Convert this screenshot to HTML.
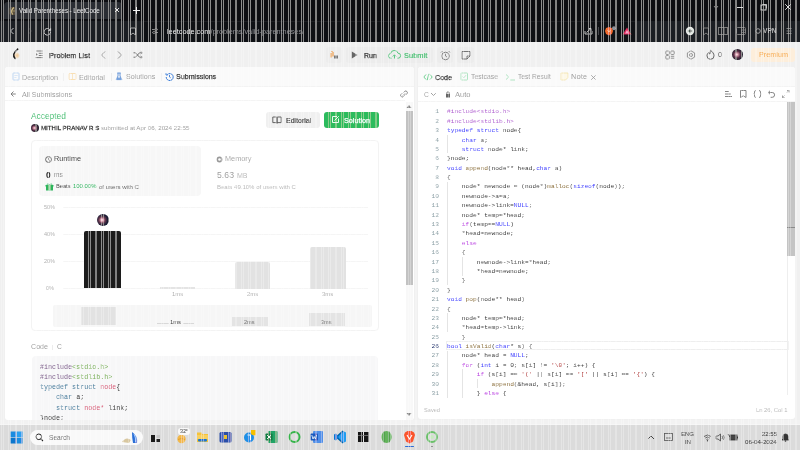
<!DOCTYPE html>
<html><head><meta charset="utf-8">
<style>
*{box-sizing:border-box;margin:0;padding:0}
html,body{width:800px;height:450px;overflow:hidden;background:#f0f0f0;font-family:"Liberation Sans",sans-serif;position:relative}
.a{position:absolute}
svg.a{overflow:visible}
.t{white-space:pre;line-height:1;will-change:transform}
.mono{font-family:"Liberation Mono",monospace}
#stripesA{left:0;top:0;width:800px;height:450px;pointer-events:none;z-index:98;mix-blend-mode:lighten;background:repeating-linear-gradient(to right,
 rgba(0,0,0,0) 0px, rgba(0,0,0,0) 1px,
 rgb(93,93,93) 1px, rgb(93,93,93) 2px,
 rgba(0,0,0,0) 2px, rgba(0,0,0,0) 3px,
 rgb(93,93,93) 3px, rgb(93,93,93) 4px,
 rgba(0,0,0,0) 4px, rgba(0,0,0,0) 8px,
 rgb(93,93,93) 8px, rgb(93,93,93) 9px,
 rgba(0,0,0,0) 9px, rgba(0,0,0,0) 10px,
 rgb(93,93,93) 10px, rgb(93,93,93) 11px,
 rgba(0,0,0,0) 11px, rgba(0,0,0,0) 15px,
 rgb(85,85,85) 15px, rgb(85,85,85) 17px,
 rgba(0,0,0,0) 17px, rgba(0,0,0,0) 20px)}
#stripesB{left:0;top:0;width:800px;height:450px;pointer-events:none;z-index:99;background:repeating-linear-gradient(to right,
 rgba(255,255,255,0) 0px, rgba(255,255,255,0) 1px,
 rgba(255,255,255,.29) 1px, rgba(255,255,255,.29) 2px,
 rgba(255,255,255,0) 2px, rgba(255,255,255,0) 3px,
 rgba(255,255,255,.29) 3px, rgba(255,255,255,.29) 4px,
 rgba(255,255,255,0) 4px, rgba(255,255,255,0) 8px,
 rgba(255,255,255,.29) 8px, rgba(255,255,255,.29) 9px,
 rgba(255,255,255,0) 9px, rgba(255,255,255,0) 10px,
 rgba(255,255,255,.29) 10px, rgba(255,255,255,.29) 11px,
 rgba(255,255,255,0) 11px, rgba(255,255,255,0) 15px,
 rgba(255,255,255,.26) 15px, rgba(255,255,255,.26) 17px,
 rgba(255,255,255,0) 17px, rgba(255,255,255,0) 20px)}
</style></head><body>
<div class="a" style="left:0px;top:0px;width:800.00px;height:42.00px;background:#0c0d11;"></div>
<div class="a" style="left:4px;top:2px;width:118.00px;height:17.00px;background:#2a2d33;border-radius:4px 4px 0 0"></div>
<div class="a" style="left:0px;top:20.5px;width:800.00px;height:21.50px;background:#1b1e23;"></div>
<div class="a" style="left:143px;top:21px;width:493.00px;height:20.50px;background:#0e1014;"></div>
<div class="a" style="left:143px;top:21px;width:493.00px;height:1.00px;background:#1c1e22;"></div>
<svg class="a" style="left:9px;top:6px;" width="7" height="10" viewBox="0 0 7 10"><rect x="0.5" y="1" width="6" height="8" rx="1.5" fill="#5a5040"/><path d="M4.8 1.5Q1 5 3.8 8.5" stroke="#d8c48a" stroke-width="1.1" fill="none"/><path d="M3.5 5H6" stroke="#a89868" stroke-width=".9"/></svg>
<div class="a t" style="left:19px;top:7.85px;font-size:6.3px;color:#f0f0f0;letter-spacing:-0.1px">Valid Parentheses - LeetCode</div>
<svg class="a" style="left:114px;top:7px;" width="6" height="6" viewBox="0 0 6 6"><path d="M1 1L5 5M5 1L1 5" stroke="#e0e0e0" stroke-width="1"/></svg>
<svg class="a" style="left:132px;top:6px;" width="9" height="9" viewBox="0 0 9 9"><path d="M4.5 1V8M1 4.5H8" stroke="#f0f0f0" stroke-width="1"/></svg>
<svg class="a" style="left:9px;top:27px;" width="6" height="8" viewBox="0 0 6 8"><path d="M4.5 1L1.5 4L4.5 7" stroke="#c8c8c8" stroke-width="1" fill="none"/></svg>
<svg class="a" style="left:27px;top:27px;" width="6" height="8" viewBox="0 0 6 8"><path d="M1.5 1L4.5 4L1.5 7" stroke="#3a3b3f" stroke-width="1" fill="none"/></svg>
<svg class="a" style="left:43px;top:27px;" width="9" height="9" viewBox="0 0 9 9"><path d="M7.2 3.2A3.3 3.3 0 1 0 7.6 5.2" stroke="#c8c8c8" stroke-width="1" fill="none"/><path d="M7.6 1.2V3.6H5.2" stroke="#c8c8c8" stroke-width="1" fill="none"/></svg>
<svg class="a" style="left:129px;top:27px;" width="8" height="9" viewBox="0 0 8 9"><path d="M1.5 1H6.5V8L4 6L1.5 8Z" stroke="#aaaaaa" stroke-width="1" fill="none"/></svg>
<svg class="a" style="left:151px;top:27px;" width="8" height="8" viewBox="0 0 8 8"><path d="M1 2.5H7M1 5.5H7" stroke="#8a8a8a" stroke-width="1"/><circle cx="5" cy="2.5" r="1.2" fill="#17181c" stroke="#8a8a8a" stroke-width=".8"/><circle cx="3" cy="5.5" r="1.2" fill="#17181c" stroke="#8a8a8a" stroke-width=".8"/></svg>
<div class="a t" style="left:167px;top:28.15px;font-size:7.3px;color:#f2f2f2;">leetcode.com<span style="color:#8d8e92">/problems/valid-parentheses/</span></div>
<svg class="a" style="left:584px;top:27px;" width="9" height="8" viewBox="0 0 9 8"><path d="M1 4V7H8V4" stroke="#c0c0c0" stroke-width="1" fill="none"/><path d="M2.5 5.5L7 1.5M4.5 1.5H7V4" stroke="#c0c0c0" stroke-width="1" fill="none"/></svg>
<div class="a" style="left:598px;top:27px;width:1.00px;height:8.00px;background:#44454a;"></div>
<svg class="a" style="left:604px;top:26px;" width="12" height="10" viewBox="0 0 12 10"><path d="M2 2L5 1L8 2L9 5L8 8L5 9.5L2 8L1 5Z" fill="#f26a2b"/><path d="M3.5 4L5 6L6.5 4" stroke="#ffd2b0" stroke-width=".8" fill="none"/><circle cx="10" cy="2.3" r="2" fill="#8d9099"/></svg>
<svg class="a" style="left:622px;top:27px;" width="10" height="8" viewBox="0 0 10 8"><path d="M5 0.5L9.5 7.5H0.5Z" fill="#e02a5c"/><path d="M5 3L7 6.5H3Z" fill="#f5a2c8"/></svg>
<svg class="a" style="left:685px;top:26px;" width="10" height="10" viewBox="0 0 10 10"><circle cx="5" cy="5" r="4.2" fill="#e4e8e4"/><path d="M5 2.8V7.2M2.8 5H7.2" stroke="#3a4a40" stroke-width=".8"/><circle cx="5" cy="5" r="1" fill="#3a4a40"/></svg>
<svg class="a" style="left:702px;top:27px;" width="8" height="9" viewBox="0 0 8 9"><path d="M1.5 1H6.5V8L4 6L1.5 8Z" stroke="#7a7a7a" stroke-width="1" fill="none"/></svg>
<svg class="a" style="left:718px;top:27px;" width="10" height="8" viewBox="0 0 10 8"><rect x="0.5" y="0.5" width="9" height="7" stroke="#7a7a7a" stroke-width="1" fill="none"/><path d="M6 0.5V7.5" stroke="#7a7a7a" stroke-width="1"/></svg>
<svg class="a" style="left:736px;top:27px;" width="10" height="8" viewBox="0 0 10 8"><rect x="0.5" y="0.5" width="9" height="7" rx="1" stroke="#7a7a7a" stroke-width="1" fill="none"/><rect x="5.5" y="3" width="4" height="2.5" stroke="#7a7a7a" stroke-width=".8" fill="none"/></svg>
<svg class="a" style="left:755px;top:27px;" width="6" height="8" viewBox="0 0 6 8"><circle cx="3" cy="4" r="2.3" stroke="#a0a0a0" stroke-width="1" fill="none"/></svg>
<div class="a t" style="left:763px;top:27.70px;font-size:6.6px;color:#b8b8b8;font-weight:700;">VPN</div>
<svg class="a" style="left:785px;top:27px;" width="8" height="8" viewBox="0 0 8 8"><path d="M1.5 1.5H6.5M1.5 4H6.5M1.5 6.5H6.5" stroke="#8a8a8a" stroke-width=".9"/></svg>
<svg class="a" style="left:712px;top:4px;" width="8" height="7" viewBox="0 0 8 7"><path d="M2 2L4 4.5L6 2" stroke="#888" stroke-width="1" fill="none"/><path d="M4 0V4.5" stroke="#666" stroke-width=".7"/></svg>
<div class="a" style="left:737px;top:7px;width:6.00px;height:1.00px;background:#d8d8d8;"></div>
<svg class="a" style="left:760px;top:3px;" width="8" height="8" viewBox="0 0 8 8"><rect x="1" y="2" width="5" height="5" stroke="#d8d8d8" stroke-width="1" fill="none"/><path d="M2.5 1.5H6.5V5.5" stroke="#d8d8d8" stroke-width=".8" fill="none"/></svg>
<svg class="a" style="left:784px;top:3px;" width="8" height="9" viewBox="0 0 8 9"><path d="M1.2 1.2L6.8 6.8M6.8 1.2L1.2 6.8" stroke="#d8d8d8" stroke-width="1"/></svg>
<div class="a" style="left:0px;top:42px;width:800.00px;height:382.00px;background:#f0f0f0;"></div>
<div class="a" style="left:13px;top:51.5px;width:7px;height:7px;border-radius:50%;background:radial-gradient(circle,#eec08a 0,#f3d6b0 35%,rgba(240,240,240,0) 72%)"></div>
<svg class="a" style="left:10px;top:47px;" width="10" height="13" viewBox="0 0 10 13"><path d="M7.5 2.2Q1.2 7.5 5.2 11.5" stroke="#1a1a1a" stroke-width="1.5" fill="none" stroke-linecap="round"/><circle cx="7.6" cy="2.2" r=".8" fill="#1a1a1a"/></svg>
<svg class="a" style="left:35px;top:50px;" width="9" height="9" viewBox="0 0 9 9"><path d="M1.2 1H7.5M3.8 3.3H7.5M3.8 5.5H7.5M0.5 7.6H7.5" stroke="#555" stroke-width=".75"/><path d="M1 3L2.6 4.4L1 5.8Z" fill="#555"/></svg>
<div class="a t" style="left:49px;top:51.91px;font-size:7.38px;color:#333;-webkit-text-stroke:0.25px #333">Problem List</div>
<svg class="a" style="left:100px;top:50px;" width="6" height="10" viewBox="0 0 6 10"><path d="M5 1.5L1.5 5L5 8.5" stroke="#9a9a9a" stroke-width="1" fill="none"/></svg>
<svg class="a" style="left:117px;top:50px;" width="6" height="10" viewBox="0 0 6 10"><path d="M1 1.5L4.5 5L1 8.5" stroke="#9a9a9a" stroke-width="1" fill="none"/></svg>
<svg class="a" style="left:133px;top:51px;" width="10" height="8" viewBox="0 0 10 8"><path d="M0.5 1.8H2.5L6.5 6.2H9M0.5 6.2H2.5L6.5 1.8H9" stroke="#666" stroke-width=".9" fill="none"/><path d="M7.8 0.5L9.2 1.8L7.8 3.1M7.8 4.9L9.2 6.2L7.8 7.5" stroke="#666" stroke-width=".8" fill="none"/></svg>
<div class="a" style="left:326px;top:47px;width:16.00px;height:16.00px;background:#ececec;border-radius:3px"></div>
<svg class="a" style="left:329px;top:50px;" width="10" height="10" viewBox="0 0 10 10"><path d="M2 3V7.5M4 2V6.5M3 1L3 2" stroke="#f0a050" stroke-width="1.2"/><rect x="5" y="5.5" width="4" height="3" fill="#777"/></svg>
<div class="a" style="left:346px;top:47px;width:87.00px;height:16.00px;background:#ececec;border-radius:3px"></div>
<svg class="a" style="left:350px;top:50px;" width="9" height="10" viewBox="0 0 9 10"><path d="M1.8 1.5L7.5 5L1.8 8.5Z" fill="#666"/></svg>
<div class="a t" style="left:364px;top:52.66px;font-size:7.09px;color:#333;-webkit-text-stroke:0.25px #333">Run</div>
<svg class="a" style="left:388px;top:49px;" width="13" height="11" viewBox="0 0 13 11"><path d="M3.5 9.2H2.8A2.3 2.3 0 0 1 2.6 4.6A3.8 3.8 0 0 1 10 4.2A2.5 2.5 0 0 1 10.2 9.2H9.5" stroke="#5cc882" stroke-width="1" fill="none"/><path d="M6.5 9.5V6M4.8 7.5L6.5 5.8L8.2 7.5" stroke="#5cc882" stroke-width="1" fill="none"/></svg>
<div class="a t" style="left:404px;top:52.45px;font-size:7.5px;color:#48c072;-webkit-text-stroke:0.2px #48c072">Submit</div>
<div class="a" style="left:437px;top:47px;width:16.00px;height:16.00px;background:#ececec;border-radius:3px"></div>
<svg class="a" style="left:440px;top:50px;" width="11" height="11" viewBox="0 0 11 11"><circle cx="5.5" cy="6" r="3.8" stroke="#777" stroke-width=".9" fill="none"/><path d="M5.5 3.8V6L7 7" stroke="#777" stroke-width=".8" fill="none"/><path d="M1 2.5L2.5 1M10 2.5L8.5 1" stroke="#777" stroke-width=".9"/></svg>
<div class="a" style="left:457px;top:47px;width:17.00px;height:16.00px;background:#ececec;border-radius:3px"></div>
<svg class="a" style="left:461px;top:50px;" width="10" height="10" viewBox="0 0 10 10"><path d="M1 1.5H9V6L6 9H1Z" stroke="#666" stroke-width=".9" fill="none"/><path d="M6 9V6H9" stroke="#666" stroke-width=".8" fill="none"/></svg>
<svg class="a" style="left:665px;top:50px;" width="10" height="10" viewBox="0 0 10 10"><rect x="0.8" y="1" width="3.5" height="3.5" rx=".8" stroke="#8a8a8a" stroke-width=".9" fill="none"/><rect x="0.8" y="5.5" width="3.5" height="3.5" rx=".8" stroke="#8a8a8a" stroke-width=".9" fill="none"/><rect x="5.7" y="1" width="3.5" height="3.5" rx=".8" stroke="#8a8a8a" stroke-width=".9" fill="none"/><path d="M5.7 6.3H9.2M5.7 8.2H9.2" stroke="#8a8a8a" stroke-width=".9"/></svg>
<svg class="a" style="left:686px;top:50px;" width="10" height="10" viewBox="0 0 10 10"><path d="M5 0.8L8.6 2.9V7.1L5 9.2L1.4 7.1V2.9Z" stroke="#8a8a8a" stroke-width=".9" fill="none"/><circle cx="5" cy="5" r="1.5" stroke="#8a8a8a" stroke-width=".9" fill="none"/></svg>
<svg class="a" style="left:706px;top:49px;" width="9" height="11" viewBox="0 0 9 11"><path d="M4.5 1.2C6.5 3 8 4.5 8 6.8A3.5 3.5 0 0 1 1 6.8C1 5.3 1.8 4.3 2.8 3.4C3 4.5 3.5 5 4 5C4.5 3.5 4.3 2.3 4.5 1.2Z" stroke="#555" stroke-width=".9" fill="none"/></svg>
<div class="a t" style="left:718px;top:51.25px;font-size:7.5px;color:#666;">0</div>
<div class="a" style="left:732px;top:49px;width:11px;height:11px;border-radius:50%;background:radial-gradient(circle at 45% 50%,#ffe8f0 0,#d090a0 16%,#5a3048 40%,#1c1a28 70%)"></div>
<div class="a" style="left:751px;top:48px;width:44.00px;height:13.50px;background:#fdeedb;border-radius:3px"></div>
<div class="a t" style="left:759px;top:50.98px;font-size:7.25px;color:#f6aa50;">Premium</div>
<div class="a" style="left:4.5px;top:67px;width:409.20px;height:352.50px;background:#ffffff;border-radius:3px"></div>
<div class="a" style="left:4.5px;top:67px;width:409.20px;height:19.00px;background:#fafafa;border-radius:3px 3px 0 0"></div>
<div class="a" style="left:4.5px;top:86px;width:409.20px;height:0.60px;background:#f3f3f3;"></div>
<div class="a" style="left:4.5px;top:100.2px;width:400.50px;height:0.60px;background:#f4f4f4;"></div>
<svg class="a" style="left:12px;top:72px;" width="8" height="9" viewBox="0 0 8 9"><rect x="1" y="1" width="6" height="7" rx=".6" stroke="#b8d2f2" stroke-width=".9" fill="none"/><path d="M2.5 3.5H5.5M2.5 5.5H4.5" stroke="#b8d2f2" stroke-width=".7"/></svg>
<div class="a t" style="left:22px;top:74.20px;font-size:7.2px;color:#a0a0a0;">Description</div>
<div class="a" style="left:63px;top:73px;width:0.60px;height:8.00px;background:#ececec;"></div>
<svg class="a" style="left:68px;top:72px;" width="9" height="9" viewBox="0 0 9 9"><rect x="1" y="1.5" width="7" height="6" rx=".6" stroke="#f8dcae" stroke-width=".9" fill="none"/><path d="M4.5 1.5V7.5" stroke="#f8dcae" stroke-width=".7"/></svg>
<div class="a t" style="left:79px;top:74.20px;font-size:7.2px;color:#a0a0a0;">Editorial</div>
<div class="a" style="left:111px;top:73px;width:0.60px;height:8.00px;background:#ececec;"></div>
<svg class="a" style="left:115px;top:72px;" width="8" height="9" viewBox="0 0 8 9"><path d="M3 1V4L1.2 7.6H6.8L5 4V1M2.3 1H5.7" stroke="#5b8fd6" stroke-width=".9" fill="none"/><path d="M2 6.2H6" stroke="#5b8fd6" stroke-width="1.2"/></svg>
<div class="a t" style="left:125.6px;top:74.22px;font-size:7.15px;color:#a0a0a0;">Solutions</div>
<div class="a" style="left:161px;top:73px;width:0.60px;height:8.00px;background:#ececec;"></div>
<svg class="a" style="left:165px;top:72px;" width="9" height="9" viewBox="0 0 9 9"><path d="M2.2 2.6A3.5 3.5 0 1 1 1.2 5" stroke="#3b7dd8" stroke-width="1" fill="none"/><path d="M4.5 3V5L6 6" stroke="#3b7dd8" stroke-width=".9" fill="none"/><path d="M1 1.2V3H2.8" stroke="#3b7dd8" stroke-width=".9" fill="none"/></svg>
<div class="a t" style="left:175.6px;top:74.23px;font-size:7.13px;color:#333;-webkit-text-stroke:0.25px #333">Submissions</div>
<svg class="a" style="left:10px;top:90px;" width="7" height="8" viewBox="0 0 7 8"><path d="M6 4H1M3.5 1.5L1 4L3.5 6.5" stroke="#777" stroke-width=".9" fill="none"/></svg>
<div class="a t" style="left:22px;top:91.66px;font-size:7.08px;color:#999;">All Submissions</div>
<svg class="a" style="left:399px;top:90px;" width="10" height="8" viewBox="0 0 10 8"><path d="M4 5.5L6 3.5" stroke="#777" stroke-width=".9"/><path d="M3.2 3.2L2 4.4A1.6 1.6 0 0 0 4.3 6.6L5.5 5.4M4.5 2.6L5.7 1.4A1.6 1.6 0 0 1 8 3.6L6.8 4.8" stroke="#777" stroke-width=".9" fill="none"/></svg>
<div class="a" style="left:405.5px;top:102px;width:7.50px;height:317.50px;background:#f8f8f8;"></div>
<svg class="a" style="left:406px;top:104px;" width="6" height="5" viewBox="0 0 6 5"><path d="M3 1L5.5 4H0.5Z" fill="#888"/></svg>
<div class="a" style="left:405.5px;top:111px;width:7.50px;height:174.00px;background:#c2c2c2;"></div>
<svg class="a" style="left:406px;top:412px;" width="6" height="5" viewBox="0 0 6 5"><path d="M3 4L5.5 1H0.5Z" fill="#888"/></svg>
<div class="a t" style="left:31px;top:111.50px;font-size:8.39px;color:#45bd70;">Accepted</div>
<div class="a" style="left:31px;top:123.8px;width:8px;height:8px;border-radius:50%;background:radial-gradient(circle at 42% 50%,#ffe8f0 0,#d090a0 16%,#5a3048 40%,#1c1a28 70%)"></div>
<div class="a t" style="left:41px;top:125.12px;font-size:6.15px;color:#3a3a3a;-webkit-text-stroke:0.3px #3a3a3a">MITHIL PRANAV R S</div>
<div class="a t" style="left:100.8px;top:124.98px;font-size:6.24px;color:#9a9a9a;">submitted at Apr 06, 2024 22:55</div>
<div class="a" style="left:266.4px;top:112px;width:53.40px;height:16.00px;background:#f0f0f0;border-radius:3px"></div>
<svg class="a" style="left:272px;top:116px;" width="10" height="8" viewBox="0 0 10 8"><path d="M0.8 1H4.2Q5 1 5 1.8V7.2Q5 6.6 4.2 6.6H0.8Z M9.2 1H5.8Q5 1 5 1.8V7.2Q5 6.6 5.8 6.6H9.2Z" stroke="#555" stroke-width=".9" fill="none"/></svg>
<div class="a t" style="left:285.6px;top:116.90px;font-size:7.0px;color:#444;-webkit-text-stroke:0.2px #444">Editorial</div>
<div class="a" style="left:324px;top:112px;width:55.30px;height:16.00px;background:#2cbb5d;border-radius:3px"></div>
<svg class="a" style="left:331px;top:115px;" width="9" height="9" viewBox="0 0 9 9"><path d="M6 1.5H1.5V7.5H7.5V3.5" stroke="#fff" stroke-width=".9" fill="none"/><path d="M3.5 5.5L7.8 1.2" stroke="#fff" stroke-width=".9"/></svg>
<div class="a t" style="left:344px;top:116.90px;font-size:7.2px;color:#ffffff;-webkit-text-stroke:0.25px #fff">Solution</div>
<div class="a" style="left:31px;top:140px;width:347.75px;height:190.50px;background:#ffffff;border:0.6px solid #f3f3f3;border-radius:4px"></div>
<div class="a" style="left:38.75px;top:146px;width:162.25px;height:50.00px;background:#f7f7f7;border-radius:4px"></div>
<svg class="a" style="left:45px;top:156px;" width="7" height="7" viewBox="0 0 7 7"><circle cx="3.5" cy="3.5" r="2.9" stroke="#444" stroke-width=".8" fill="none"/><path d="M3.5 1.8V3.6L4.6 4.4" stroke="#444" stroke-width=".7" fill="none"/></svg>
<div class="a t" style="left:54px;top:155.07px;font-size:7.25px;color:#444;">Runtime</div>
<div class="a t" style="left:46px;top:170.75px;font-size:8.5px;color:#222;font-weight:700;">0</div>
<div class="a t" style="left:54px;top:172.25px;font-size:6.5px;color:#888;">ms</div>
<svg class="a" style="left:45px;top:183px;" width="9" height="8" viewBox="0 0 9 8"><path d="M1 3H8V7.5H1Z" fill="#2db55d"/><path d="M0.5 2H8.5V3.5H0.5Z" fill="#2db55d"/><path d="M4.5 2V7.5" stroke="#fff" stroke-width=".6"/><path d="M4.5 2C3 0 1.5 1 2.5 2M4.5 2C6 0 7.5 1 6.5 2" stroke="#2db55d" stroke-width=".7" fill="none"/></svg>
<div class="a t" style="left:55.5px;top:184.16px;font-size:5.67px;color:#444;">Beats</div>
<div class="a t" style="left:72.5px;top:184.03px;font-size:5.95px;color:#2db55d;">100.00%</div>
<div class="a t" style="left:99px;top:183.97px;font-size:6.05px;color:#666;">of users with C</div>
<svg class="a" style="left:216px;top:156px;" width="7" height="7" viewBox="0 0 7 7"><circle cx="3.5" cy="3.5" r="2.9" fill="#999"/><circle cx="3.5" cy="3.5" r="1.3" fill="#fff"/></svg>
<div class="a t" style="left:224.5px;top:155.03px;font-size:7.34px;color:#a8a8a8;">Memory</div>
<div class="a t" style="left:217px;top:170.63px;font-size:8.74px;color:#a0a0a0;">5.63</div>
<div class="a t" style="left:236.5px;top:171.80px;font-size:7.0px;color:#b8b8b8;">MB</div>
<div class="a t" style="left:217px;top:183.99px;font-size:6.02px;color:#b8b8b8;">Beats 49.10% of users with C</div>
<div class="a t" style="left:44px;top:204.55px;font-size:5.5px;color:#b0b0b0;">50%</div>
<div class="a" style="left:63px;top:206.5px;width:304.70px;height:0.60px;background:#f5f5f5;"></div>
<div class="a t" style="left:44px;top:231.55px;font-size:5.5px;color:#b0b0b0;">40%</div>
<div class="a" style="left:63px;top:233.5px;width:304.70px;height:0.60px;background:#f5f5f5;"></div>
<div class="a t" style="left:44px;top:259.05px;font-size:5.5px;color:#b0b0b0;">20%</div>
<div class="a" style="left:63px;top:261px;width:304.70px;height:0.60px;background:#f5f5f5;"></div>
<div class="a t" style="left:45.5px;top:286.05px;font-size:5.5px;color:#b0b0b0;">0%</div>
<div class="a" style="left:63px;top:288px;width:304.70px;height:0.60px;background:#f5f5f5;"></div>
<div class="a" style="left:84px;top:231px;width:37.00px;height:56.60px;background:#1c1c1c;border-radius:2px 2px 0 0"></div>
<div class="a" style="left:96.6px;top:214px;width:12px;height:12px;border-radius:50%;background:radial-gradient(circle at 42% 50%,#fff0f0 0,#e0a0b0 14%,#6a3a50 34%,#1a1c34 60%,#161628 80%)"></div>
<div class="a" style="left:160px;top:286.5px;width:35.00px;height:2.50px;background:#e4e4e4;"></div>
<div class="a" style="left:234.5px;top:262px;width:35.50px;height:27.00px;background:#e2e2e2;border-radius:2px 2px 0 0"></div>
<div class="a" style="left:309.5px;top:246.5px;width:36.10px;height:42.50px;background:#e2e2e2;border-radius:2px 2px 0 0"></div>
<div class="a t" style="left:172.3px;top:292.05px;font-size:5.9px;color:#b0b0b0;">1ms</div>
<div class="a t" style="left:246.5px;top:292.05px;font-size:5.9px;color:#b0b0b0;">2ms</div>
<div class="a t" style="left:321.5px;top:292.05px;font-size:5.9px;color:#b0b0b0;">3ms</div>
<div class="a" style="left:53px;top:304.7px;width:319.00px;height:22.30px;background:#f6f6f6;border-radius:2px"></div>
<div class="a" style="left:80.6px;top:307px;width:35.40px;height:18.00px;background:#e2e2e2;"></div>
<div class="a" style="left:157px;top:322.8px;width:37.00px;height:0.60px;background:#d8d8d8;"></div>
<div class="a" style="left:169px;top:319px;width:14.00px;height:7.00px;background:#f6f6f6;"></div>
<div class="a t" style="left:170px;top:319.60px;font-size:5.8px;color:#444;">1ms</div>
<div class="a" style="left:232px;top:317px;width:36.00px;height:8.60px;background:#e4e4e4;"></div>
<div class="a t" style="left:244px;top:320.00px;font-size:5.6px;color:#777;">2ms</div>
<div class="a" style="left:309px;top:312.7px;width:35.50px;height:12.90px;background:#e4e4e4;"></div>
<div class="a t" style="left:321px;top:320.20px;font-size:5.6px;color:#777;">3ms</div>
<div class="a t" style="left:31px;top:343.75px;font-size:7.11px;color:#a0a0a0;">Code</div>
<div class="a" style="left:52px;top:344.5px;width:0.60px;height:5.50px;background:#ececec;"></div>
<div class="a t" style="left:57px;top:343.90px;font-size:6.8px;color:#a0a0a0;">C</div>
<div class="a" style="left:31.5px;top:355.5px;width:346.00px;height:65.50px;background:#f7f7f8;border-radius:4px 4px 0 0"></div>
<div class="a t mono" style="left:39.5px;top:363.80px;font-size:6.69px;"><span style="color:#7a5a88">#include</span><span style="color:#7ab05a">&lt;stdio.h&gt;</span></div>
<div class="a t mono" style="left:39.5px;top:374.00px;font-size:6.69px;"><span style="color:#7a5a88">#include</span><span style="color:#7ab05a">&lt;stdlib.h&gt;</span></div>
<div class="a t mono" style="left:39.5px;top:384.20px;font-size:6.69px;"><span style="color:#4a7d9c">typedef struct </span><span style="color:#d8607a">node</span><span style="color:#3a3a3a">{</span></div>
<div class="a t mono" style="left:39.5px;top:394.40px;font-size:6.69px;"><span style="color:#3a3a3a">    </span><span style="color:#4a7d9c">char</span><span style="color:#3a3a3a"> a;</span></div>
<div class="a t mono" style="left:39.5px;top:404.60px;font-size:6.69px;"><span style="color:#3a3a3a">    </span><span style="color:#4a7d9c">struct </span><span style="color:#d8607a">node*</span><span style="color:#3a3a3a"> link;</span></div>
<div class="a t mono" style="left:39.5px;top:414.80px;font-size:6.69px;"><span style="color:#3a3a3a">}node;</span></div>
<div class="a" style="left:0px;top:419.5px;width:800.00px;height:5.30px;background:#f2f2f2;"></div>
<div class="a" style="left:418px;top:67px;width:376.70px;height:352.00px;background:#ffffff;border-radius:3px"></div>
<div class="a" style="left:418px;top:67px;width:376.70px;height:19.00px;background:#fafafa;border-radius:3px 3px 0 0"></div>
<div class="a" style="left:418px;top:86px;width:376.70px;height:0.60px;background:#f3f3f3;"></div>
<div class="a" style="left:418px;top:101.2px;width:376.70px;height:0.60px;background:#f4f4f4;"></div>
<svg class="a" style="left:423px;top:73px;" width="10" height="8" viewBox="0 0 10 8"><path d="M3 1.5L0.8 4L3 6.5M7 1.5L9.2 4L7 6.5M5.8 0.8L4.2 7.2" stroke="#5cc882" stroke-width=".9" fill="none"/></svg>
<div class="a t" style="left:434.5px;top:74.64px;font-size:7.11px;color:#333;-webkit-text-stroke:0.25px #333">Code</div>
<svg class="a" style="left:460px;top:72px;" width="8" height="9" viewBox="0 0 8 9"><rect x="1" y="1" width="6.5" height="7" rx=".6" stroke="#a8e2bc" stroke-width=".9" fill="none"/><path d="M2.6 4.6L3.8 5.8L6 3.2" stroke="#a8e2bc" stroke-width=".8" fill="none"/></svg>
<div class="a t" style="left:470.5px;top:74.38px;font-size:6.84px;color:#a0a0a0;">Testcase</div>
<svg class="a" style="left:505px;top:73px;" width="11" height="8" viewBox="0 0 11 8"><path d="M1 1.5L3.8 4L1 6.5" stroke="#a8e2bc" stroke-width=".9" fill="none"/><path d="M5 7H10" stroke="#a8e2bc" stroke-width=".9"/></svg>
<div class="a t" style="left:517.5px;top:74.47px;font-size:6.67px;color:#a0a0a0;">Test Result</div>
<svg class="a" style="left:560px;top:72px;" width="9" height="9" viewBox="0 0 9 9"><path d="M1 1H8V5.5L5.5 8H1Z" stroke="#f3e2a8" stroke-width=".8" fill="#fdf8e8"/></svg>
<div class="a t" style="left:571px;top:73.30px;font-size:7.6px;color:#999;">Note</div>
<svg class="a" style="left:590px;top:74px;" width="7" height="7" viewBox="0 0 7 7"><path d="M1.2 1.2L5.8 5.8M5.8 1.2L1.2 5.8" stroke="#999" stroke-width=".8"/></svg>
<div class="a t" style="left:424px;top:91.70px;font-size:6.8px;color:#a8a8a8;">C</div>
<svg class="a" style="left:430px;top:92px;" width="7" height="5" viewBox="0 0 7 5"><path d="M1 1L3.5 3.5L6 1" stroke="#999" stroke-width=".9" fill="none"/></svg>
<svg class="a" style="left:445px;top:91px;" width="6" height="7" viewBox="0 0 6 7"><rect x="1" y="3" width="4" height="3.5" fill="#666"/><path d="M1.8 3V2A1.2 1.2 0 0 1 4.2 2V3" stroke="#666" stroke-width=".8" fill="none"/></svg>
<div class="a t" style="left:454.5px;top:90.73px;font-size:7.54px;color:#999;">Auto</div>
<svg class="a" style="left:724px;top:89px;" width="10" height="10" viewBox="0 0 10 10"><path d="M1 2.5H5M1 5H7M1 7.5H8" stroke="#777" stroke-width=".9"/></svg>
<svg class="a" style="left:739px;top:89px;" width="9" height="10" viewBox="0 0 9 10"><path d="M1.5 1.5H7V8.5L4.25 6.8L1.5 8.5Z" stroke="#777" stroke-width=".9" fill="none"/></svg>
<svg class="a" style="left:753px;top:89px;" width="9" height="10" viewBox="0 0 9 10"><path d="M3 1.5Q1.5 1.5 1.5 3V4.3L0.8 5L1.5 5.7V7Q1.5 8.5 3 8.5M6 1.5Q7.5 1.5 7.5 3V4.3L8.2 5L7.5 5.7V7Q7.5 8.5 6 8.5" stroke="#777" stroke-width=".85" fill="none"/></svg>
<svg class="a" style="left:767px;top:89px;" width="9" height="10" viewBox="0 0 9 10"><path d="M3 1.8L1.2 3.5L3 5.2" stroke="#777" stroke-width=".9" fill="none"/><path d="M1.5 3.5H5.2A2.4 2.4 0 0 1 5.2 8.3H3.5" stroke="#777" stroke-width=".9" fill="none"/></svg>
<svg class="a" style="left:781px;top:89px;" width="9" height="10" viewBox="0 0 9 10"><path d="M6 1.5H8V3.5M1.5 6.5V8.5H3.5" stroke="#888" stroke-width=".8" fill="none"/><path d="M8 1.5L6 3.5M1.5 8.5L3.5 6.5" stroke="#888" stroke-width=".7"/></svg>
<div class="a" style="left:418px;top:102px;width:376.70px;height:303.00px;background:#ffffff;"></div>
<div class="a" style="left:446px;top:341px;width:343.00px;height:9.30px;background:transparent;border:0.7px solid #eeeeee"></div>
<div class="a" style="left:787px;top:102px;width:0.60px;height:293.00px;background:#eeeeee;"></div>
<div class="a" style="left:787.3px;top:102px;width:7.70px;height:154.00px;background:#c4c4c4;"></div>
<div class="a" style="left:787.3px;top:226.5px;width:7.70px;height:1.50px;background:#8a8a8a;"></div>
<div class="a" style="left:447px;top:134.72500000000002px;width:0.70px;height:9.39px;background:#e4e4e4;"></div>
<div class="a" style="left:447px;top:144.115px;width:0.70px;height:9.39px;background:#e4e4e4;"></div>
<div class="a" style="left:447px;top:181.675px;width:0.70px;height:9.39px;background:#e4e4e4;"></div>
<div class="a" style="left:447px;top:191.065px;width:0.70px;height:9.39px;background:#e4e4e4;"></div>
<div class="a" style="left:447px;top:200.455px;width:0.70px;height:9.39px;background:#e4e4e4;"></div>
<div class="a" style="left:447px;top:209.84500000000003px;width:0.70px;height:9.39px;background:#e4e4e4;"></div>
<div class="a" style="left:447px;top:219.235px;width:0.70px;height:9.39px;background:#e4e4e4;"></div>
<div class="a" style="left:447px;top:228.625px;width:0.70px;height:9.39px;background:#e4e4e4;"></div>
<div class="a" style="left:447px;top:238.01500000000001px;width:0.70px;height:9.39px;background:#e4e4e4;"></div>
<div class="a" style="left:447px;top:247.40500000000003px;width:0.70px;height:9.39px;background:#e4e4e4;"></div>
<div class="a" style="left:447px;top:256.795px;width:0.70px;height:9.39px;background:#e4e4e4;"></div>
<div class="a" style="left:447px;top:266.185px;width:0.70px;height:9.39px;background:#e4e4e4;"></div>
<div class="a" style="left:447px;top:275.575px;width:0.70px;height:9.39px;background:#e4e4e4;"></div>
<div class="a" style="left:447px;top:313.13500000000005px;width:0.70px;height:9.39px;background:#e4e4e4;"></div>
<div class="a" style="left:447px;top:322.52500000000003px;width:0.70px;height:9.39px;background:#e4e4e4;"></div>
<div class="a" style="left:447px;top:350.695px;width:0.70px;height:9.39px;background:#e4e4e4;"></div>
<div class="a" style="left:447px;top:360.08500000000004px;width:0.70px;height:9.39px;background:#e4e4e4;"></div>
<div class="a" style="left:447px;top:369.475px;width:0.70px;height:9.39px;background:#e4e4e4;"></div>
<div class="a" style="left:447px;top:378.865px;width:0.70px;height:9.39px;background:#e4e4e4;"></div>
<div class="a" style="left:447px;top:388.25500000000005px;width:0.70px;height:9.39px;background:#e4e4e4;"></div>
<div class="a" style="left:462px;top:256.795px;width:0.70px;height:9.39px;background:#e4e4e4;"></div>
<div class="a" style="left:462px;top:266.185px;width:0.70px;height:9.39px;background:#e4e4e4;"></div>
<div class="a" style="left:462px;top:369.475px;width:0.70px;height:9.39px;background:#e4e4e4;"></div>
<div class="a" style="left:462px;top:378.865px;width:0.70px;height:9.39px;background:#e4e4e4;"></div>
<div class="a" style="left:462px;top:388.25500000000005px;width:0.70px;height:9.39px;background:#e4e4e4;"></div>
<div class="a" style="left:477px;top:378.865px;width:0.70px;height:9.39px;background:#e4e4e4;"></div>
<div class="a t mono" style="left:419px;width:20px;text-align:right;top:109.35px;font-size:6.19px;color:#8a9ea4">1</div>
<div class="a t mono" style="left:447px;top:109.35px;font-size:6.19px;"><span style="color:#b060d0">#include&lt;stdio.h&gt;</span></div>
<div class="a t mono" style="left:419px;width:20px;text-align:right;top:118.74px;font-size:6.19px;color:#8a9ea4">2</div>
<div class="a t mono" style="left:447px;top:118.74px;font-size:6.19px;"><span style="color:#b060d0">#include&lt;stdlib.h&gt;</span></div>
<div class="a t mono" style="left:419px;width:20px;text-align:right;top:128.13px;font-size:6.19px;color:#8a9ea4">3</div>
<div class="a t mono" style="left:447px;top:128.13px;font-size:6.19px;"><span style="color:#3a3aff">typedef</span><span style="color:#3a3a3a"> </span><span style="color:#3a3aff">struct</span><span style="color:#3a3a3a"> node{</span></div>
<div class="a t mono" style="left:419px;width:20px;text-align:right;top:137.52px;font-size:6.19px;color:#8a9ea4">4</div>
<div class="a t mono" style="left:447px;top:137.52px;font-size:6.19px;"><span style="color:#3a3a3a">    </span><span style="color:#3a3aff">char</span><span style="color:#3a3a3a"> a;</span></div>
<div class="a t mono" style="left:419px;width:20px;text-align:right;top:146.91px;font-size:6.19px;color:#8a9ea4">5</div>
<div class="a t mono" style="left:447px;top:146.91px;font-size:6.19px;"><span style="color:#3a3a3a">    </span><span style="color:#3a3aff">struct</span><span style="color:#3a3a3a"> node* link;</span></div>
<div class="a t mono" style="left:419px;width:20px;text-align:right;top:156.30px;font-size:6.19px;color:#8a9ea4">6</div>
<div class="a t mono" style="left:447px;top:156.30px;font-size:6.19px;"><span style="color:#3a3a3a">}node;</span></div>
<div class="a t mono" style="left:419px;width:20px;text-align:right;top:165.69px;font-size:6.19px;color:#8a9ea4">7</div>
<div class="a t mono" style="left:447px;top:165.69px;font-size:6.19px;"><span style="color:#3a3aff">void</span><span style="color:#3a3a3a"> </span><span style="color:#8a6e3a">append</span><span style="color:#3a3a3a">(node** head,</span><span style="color:#3a3aff">char</span><span style="color:#3a3a3a"> a)</span></div>
<div class="a t mono" style="left:419px;width:20px;text-align:right;top:175.08px;font-size:6.19px;color:#8a9ea4">8</div>
<div class="a t mono" style="left:447px;top:175.08px;font-size:6.19px;"><span style="color:#3a3a3a">{</span></div>
<div class="a t mono" style="left:419px;width:20px;text-align:right;top:184.47px;font-size:6.19px;color:#8a9ea4">9</div>
<div class="a t mono" style="left:447px;top:184.47px;font-size:6.19px;"><span style="color:#3a3a3a">    node* newnode = (node*)</span><span style="color:#8a6e3a">malloc</span><span style="color:#3a3a3a">(</span><span style="color:#3a3aff">sizeof</span><span style="color:#3a3a3a">(node));</span></div>
<div class="a t mono" style="left:419px;width:20px;text-align:right;top:193.86px;font-size:6.19px;color:#8a9ea4">10</div>
<div class="a t mono" style="left:447px;top:193.86px;font-size:6.19px;"><span style="color:#3a3a3a">    newnode-&gt;a=a;</span></div>
<div class="a t mono" style="left:419px;width:20px;text-align:right;top:203.25px;font-size:6.19px;color:#8a9ea4">11</div>
<div class="a t mono" style="left:447px;top:203.25px;font-size:6.19px;"><span style="color:#3a3a3a">    newnode-&gt;link=</span><span style="color:#3a3aff">NULL</span><span style="color:#3a3a3a">;</span></div>
<div class="a t mono" style="left:419px;width:20px;text-align:right;top:212.64px;font-size:6.19px;color:#8a9ea4">12</div>
<div class="a t mono" style="left:447px;top:212.64px;font-size:6.19px;"><span style="color:#3a3a3a">    node* temp=*head;</span></div>
<div class="a t mono" style="left:419px;width:20px;text-align:right;top:222.03px;font-size:6.19px;color:#8a9ea4">13</div>
<div class="a t mono" style="left:447px;top:222.03px;font-size:6.19px;"><span style="color:#3a3a3a">    </span><span style="color:#b940e0">if</span><span style="color:#3a3a3a">(temp==</span><span style="color:#3a3aff">NULL</span><span style="color:#3a3a3a">)</span></div>
<div class="a t mono" style="left:419px;width:20px;text-align:right;top:231.42px;font-size:6.19px;color:#8a9ea4">14</div>
<div class="a t mono" style="left:447px;top:231.42px;font-size:6.19px;"><span style="color:#3a3a3a">    *head=newnode;</span></div>
<div class="a t mono" style="left:419px;width:20px;text-align:right;top:240.81px;font-size:6.19px;color:#8a9ea4">15</div>
<div class="a t mono" style="left:447px;top:240.81px;font-size:6.19px;"><span style="color:#3a3a3a">    </span><span style="color:#b940e0">else</span></div>
<div class="a t mono" style="left:419px;width:20px;text-align:right;top:250.20px;font-size:6.19px;color:#8a9ea4">16</div>
<div class="a t mono" style="left:447px;top:250.20px;font-size:6.19px;"><span style="color:#3a3a3a">    {</span></div>
<div class="a t mono" style="left:419px;width:20px;text-align:right;top:259.59px;font-size:6.19px;color:#8a9ea4">17</div>
<div class="a t mono" style="left:447px;top:259.59px;font-size:6.19px;"><span style="color:#3a3a3a">        newnode-&gt;link=*head;</span></div>
<div class="a t mono" style="left:419px;width:20px;text-align:right;top:268.98px;font-size:6.19px;color:#8a9ea4">18</div>
<div class="a t mono" style="left:447px;top:268.98px;font-size:6.19px;"><span style="color:#3a3a3a">        *head=newnode;</span></div>
<div class="a t mono" style="left:419px;width:20px;text-align:right;top:278.37px;font-size:6.19px;color:#8a9ea4">19</div>
<div class="a t mono" style="left:447px;top:278.37px;font-size:6.19px;"><span style="color:#3a3a3a">    }</span></div>
<div class="a t mono" style="left:419px;width:20px;text-align:right;top:287.76px;font-size:6.19px;color:#8a9ea4">20</div>
<div class="a t mono" style="left:447px;top:287.76px;font-size:6.19px;"><span style="color:#3a3a3a">}</span></div>
<div class="a t mono" style="left:419px;width:20px;text-align:right;top:297.15px;font-size:6.19px;color:#8a9ea4">21</div>
<div class="a t mono" style="left:447px;top:297.15px;font-size:6.19px;"><span style="color:#3a3aff">void</span><span style="color:#3a3a3a"> </span><span style="color:#8a6e3a">pop</span><span style="color:#3a3a3a">(node** head)</span></div>
<div class="a t mono" style="left:419px;width:20px;text-align:right;top:306.54px;font-size:6.19px;color:#8a9ea4">22</div>
<div class="a t mono" style="left:447px;top:306.54px;font-size:6.19px;"><span style="color:#3a3a3a">{</span></div>
<div class="a t mono" style="left:419px;width:20px;text-align:right;top:315.93px;font-size:6.19px;color:#8a9ea4">23</div>
<div class="a t mono" style="left:447px;top:315.93px;font-size:6.19px;"><span style="color:#3a3a3a">    node* temp=*head;</span></div>
<div class="a t mono" style="left:419px;width:20px;text-align:right;top:325.32px;font-size:6.19px;color:#8a9ea4">24</div>
<div class="a t mono" style="left:447px;top:325.32px;font-size:6.19px;"><span style="color:#3a3a3a">    *head=temp-&gt;link;</span></div>
<div class="a t mono" style="left:419px;width:20px;text-align:right;top:334.71px;font-size:6.19px;color:#8a9ea4">25</div>
<div class="a t mono" style="left:447px;top:334.71px;font-size:6.19px;"><span style="color:#3a3a3a">    }</span></div>
<div class="a t mono" style="left:419px;width:20px;text-align:right;top:344.10px;font-size:6.19px;color:#2a3a70">26</div>
<div class="a t mono" style="left:447px;top:344.10px;font-size:6.19px;"><span style="color:#3a3aff">bool</span><span style="color:#3a3a3a"> </span><span style="color:#8a6e3a">isValid</span><span style="color:#3a3a3a">(</span><span style="color:#3a3aff">char</span><span style="color:#3a3a3a">* s) {</span></div>
<div class="a t mono" style="left:419px;width:20px;text-align:right;top:353.49px;font-size:6.19px;color:#8a9ea4">27</div>
<div class="a t mono" style="left:447px;top:353.49px;font-size:6.19px;"><span style="color:#3a3a3a">    node* head = </span><span style="color:#3a3aff">NULL</span><span style="color:#3a3a3a">;</span></div>
<div class="a t mono" style="left:419px;width:20px;text-align:right;top:362.88px;font-size:6.19px;color:#8a9ea4">28</div>
<div class="a t mono" style="left:447px;top:362.88px;font-size:6.19px;"><span style="color:#3a3a3a">    </span><span style="color:#b940e0">for</span><span style="color:#3a3a3a"> (</span><span style="color:#3a3aff">int</span><span style="color:#3a3a3a"> i = 0; s[i] != </span><span style="color:#b03a3a">'\0'</span><span style="color:#3a3a3a">; i++) {</span></div>
<div class="a t mono" style="left:419px;width:20px;text-align:right;top:372.27px;font-size:6.19px;color:#8a9ea4">29</div>
<div class="a t mono" style="left:447px;top:372.27px;font-size:6.19px;"><span style="color:#3a3a3a">        </span><span style="color:#b940e0">if</span><span style="color:#3a3a3a"> (s[i] == </span><span style="color:#b03a3a">'('</span><span style="color:#3a3a3a"> || s[i] == </span><span style="color:#b03a3a">'['</span><span style="color:#3a3a3a"> || s[i] == </span><span style="color:#b03a3a">'{'</span><span style="color:#3a3a3a">) {</span></div>
<div class="a t mono" style="left:419px;width:20px;text-align:right;top:381.66px;font-size:6.19px;color:#8a9ea4">30</div>
<div class="a t mono" style="left:447px;top:381.66px;font-size:6.19px;"><span style="color:#3a3a3a">            </span><span style="color:#8a6e3a">append</span><span style="color:#3a3a3a">(&amp;head, s[i]);</span></div>
<div class="a t mono" style="left:419px;width:20px;text-align:right;top:391.05px;font-size:6.19px;color:#8a9ea4">31</div>
<div class="a t mono" style="left:447px;top:391.05px;font-size:6.19px;"><span style="color:#3a3a3a">        } </span><span style="color:#b940e0">else</span><span style="color:#3a3a3a"> {</span></div>
<div class="a t" style="left:424px;top:407.68px;font-size:5.64px;color:#b8b8b8;">Saved</div>
<div class="a t" style="left:756px;top:407.58px;font-size:5.84px;color:#b8b8b8;">Ln 26, Col 1</div>
<div class="a" style="left:0px;top:424.8px;width:800.00px;height:25.20px;background:#dbdbdb;"></div>
<div class="a" style="left:0px;top:424px;width:800.00px;height:0.80px;background:#f6f6f6;"></div>
<svg class="a" style="left:10px;top:431px;" width="13" height="13" viewBox="0 0 13 13"><rect x="0.5" y="0.5" width="5.7" height="5.7" fill="#1a8ce0"/><rect x="6.8" y="0.5" width="5.7" height="5.7" fill="#2aa0f0"/><rect x="0.5" y="6.8" width="5.7" height="5.7" fill="#0b76cc"/><rect x="6.8" y="6.8" width="5.7" height="5.7" fill="#1a8ce0"/></svg>
<div class="a" style="left:30px;top:429.6px;width:112.50px;height:15.20px;background:#f9f9f9;border-radius:8px"></div>
<svg class="a" style="left:35px;top:433px;" width="9" height="9" viewBox="0 0 9 9"><circle cx="3.8" cy="3.8" r="2.8" stroke="#222" stroke-width="1" fill="none"/><path d="M5.8 5.8L8 8" stroke="#222" stroke-width="1.1"/></svg>
<div class="a t" style="left:49px;top:434.70px;font-size:6.6px;color:#707070;">Search</div>
<svg class="a" style="left:120px;top:430px;" width="22" height="15" viewBox="0 0 22 15"><path d="M2 12Q6 6 11 10L9 13Z" fill="#d8c7a0"/><path d="M12 2Q18 6 17 13H13Q12 8 12 2Z" fill="#2a6fd6"/><path d="M14 4Q16 8 15.5 12" stroke="#9cc4ff" stroke-width="1" fill="none"/></svg>
<div class="a" style="left:151px;top:434.5px;width:4.00px;height:7.50px;background:#1a1a1a;"></div>
<div class="a" style="left:155.5px;top:434.5px;width:4.50px;height:3.50px;background:#c8c8c8;"></div>
<div class="a" style="left:155.5px;top:438.5px;width:4.50px;height:3.50px;background:#222;"></div>
<svg class="a" style="left:174px;top:429px;" width="19" height="15" viewBox="0 0 19 15"><circle cx="7.5" cy="10" r="4.2" fill="#f2b84a"/><path d="M4 10.5Q7.5 8.5 11 10.5" stroke="#e09a20" stroke-width=".8" fill="none"/></svg>
<div class="a" style="left:178px;top:427.5px;width:12.00px;height:7.00px;background:#f8f8f8;border-radius:3px"></div>
<div class="a t" style="left:179.5px;top:428.70px;font-size:5.2px;color:#222;">32°</div>
<svg class="a" style="left:196px;top:431px;" width="13" height="12" viewBox="0 0 13 12"><path d="M1 1.5H5.5L6.5 3H12V11H1Z" fill="#f5c33b"/><path d="M1 4H12V8H1Z" fill="#f8d060"/><rect x="2" y="8" width="9" height="2.5" rx="1" fill="#1a78d0"/></svg>
<svg class="a" style="left:219px;top:431px;" width="13" height="12" viewBox="0 0 13 12"><rect x="0.5" y="1" width="12" height="10.5" rx="1.5" fill="#2a4fa8"/><path d="M3 1.5V11M10 1.5V11" stroke="#5a86e0" stroke-width="1"/><rect x="5" y="4" width="3" height="4" fill="#e8c030"/></svg>
<svg class="a" style="left:243px;top:429px;" width="14" height="15" viewBox="0 0 14 15"><circle cx="6" cy="8.5" r="5" fill="#1d8fe6"/><path d="M8 1H13V6Q10 7 8 5Z" fill="#f5c000"/><path d="M4.5 6H7.5V11" stroke="#fff" stroke-width="1.1" fill="none"/></svg>
<svg class="a" style="left:265px;top:430px;" width="13" height="14" viewBox="0 0 13 14"><rect x="3" y="1" width="9.5" height="12" rx="1" fill="#21a366"/><rect x="0.5" y="3.5" width="7" height="7" rx=".8" fill="#107c41"/><path d="M2.2 5L5.8 9M5.8 5L2.2 9" stroke="#fff" stroke-width="1"/></svg>
<svg class="a" style="left:288px;top:430px;" width="13" height="14" viewBox="0 0 13 14"><circle cx="6.5" cy="7" r="5" stroke="#35b44a" stroke-width="2" fill="none"/></svg>
<svg class="a" style="left:310px;top:430px;" width="14" height="14" viewBox="0 0 14 14"><rect x="3" y="1" width="10" height="12" rx="1" fill="#4f8fe8"/><rect x="0.5" y="3.5" width="7.5" height="7" rx=".8" fill="#185abd"/><path d="M1.8 5L3 9L4.2 6.5L5.4 9L6.6 5" stroke="#fff" stroke-width=".8" fill="none"/></svg>
<svg class="a" style="left:333px;top:430px;" width="14" height="14" viewBox="0 0 14 14"><path d="M10 1L13 2.5V11.5L10 13L3 7Z" fill="#1f9cf0"/><path d="M10 1L3.5 7L10 13" stroke="#0065a9" stroke-width="1.5" fill="none"/><path d="M1 4.5L3 3.5L6 7L3 10.5L1 9.5Z" fill="#0078d4"/></svg>
<svg class="a" style="left:357px;top:431px;" width="13" height="12" viewBox="0 0 13 12"><rect x="1" y="1" width="5" height="10" fill="#151515"/><rect x="7" y="1" width="5" height="10" fill="#151515"/><rect x="1" y="4" width="11" height="1" fill="#666"/></svg>
<svg class="a" style="left:380px;top:430px;" width="13" height="14" viewBox="0 0 13 14"><ellipse cx="6.5" cy="7" rx="5.2" ry="6" fill="#62b35a"/><path d="M4 1.5V12.5M9 1.5V12.5" stroke="#3e8a38" stroke-width=".8"/></svg>
<div class="a" style="left:401px;top:427px;width:18.00px;height:20.00px;background:#dedede;border-radius:3px"></div>
<svg class="a" style="left:403px;top:430px;" width="13" height="14" viewBox="0 0 13 14"><path d="M2 2.5L4.5 1H8.5L11 2.5L12 5L10 11.5L6.5 13.5L3 11.5L1 5Z" fill="#fb542b"/><path d="M4 5L6.5 9L9 5" stroke="#fff" stroke-width="1.1" fill="none"/></svg>
<div class="a" style="left:405px;top:446px;width:9.00px;height:1.30px;background:#2a6fd6;border-radius:1px"></div>
<svg class="a" style="left:425px;top:430px;" width="14" height="14" viewBox="0 0 14 14"><circle cx="7" cy="7" r="5" stroke="#6bc06a" stroke-width="2" fill="none"/><circle cx="7" cy="7" r="2" fill="#c8eac0"/></svg>
<div class="a" style="left:430.5px;top:446px;width:2.50px;height:1.00px;background:#888;border-radius:1px"></div>
<svg class="a" style="left:647px;top:435px;" width="8" height="5" viewBox="0 0 8 5"><path d="M1 4L4 1L7 4" stroke="#333" stroke-width=".9" fill="none"/></svg>
<svg class="a" style="left:664px;top:433px;" width="9" height="8" viewBox="0 0 9 8"><rect x="0.5" y="0.5" width="8" height="7" stroke="#555" stroke-width=".8" fill="none"/><path d="M2 5H7" stroke="#555" stroke-width=".8"/></svg>
<div class="a t" style="left:681px;top:430.70px;font-size:6.0px;color:#333;">ENG</div>
<div class="a t" style="left:685px;top:438.70px;font-size:6.0px;color:#333;">IN</div>
<svg class="a" style="left:703px;top:433px;" width="9" height="9" viewBox="0 0 9 9"><path d="M1 3.5Q4.5 0.5 8 3.5M2.3 5Q4.5 3 6.7 5M3.5 6.5Q4.5 5.7 5.5 6.5" stroke="#444" stroke-width=".8" fill="none"/><circle cx="4.5" cy="7.8" r=".7" fill="#444"/></svg>
<svg class="a" style="left:715px;top:433px;" width="10" height="9" viewBox="0 0 10 9"><path d="M1 3H3L5.5 1V8L3 6H1Z" stroke="#444" stroke-width=".8" fill="none"/><path d="M7 3Q8 4.5 7 6M8.3 2Q9.8 4.5 8.3 7" stroke="#444" stroke-width=".7" fill="none"/></svg>
<svg class="a" style="left:728px;top:433px;" width="11" height="9" viewBox="0 0 11 9"><rect x="2" y="2" width="7" height="5" stroke="#333" stroke-width=".8" fill="#444"/><path d="M9.5 3.5V5.5" stroke="#333" stroke-width="1"/><path d="M0 1L2 4" stroke="#333" stroke-width=".8"/></svg>
<div class="a t" style="left:762px;top:430.70px;font-size:6.0px;color:#333;">22:55</div>
<div class="a t" style="left:745px;top:438.60px;font-size:6.2px;color:#333;">06-04-2024</div>
<svg class="a" style="left:781px;top:432px;" width="9" height="10" viewBox="0 0 9 10"><path d="M2 7V4.5A2.5 2.5 0 0 1 7 4.5V7L8 8H1Z" stroke="#333" stroke-width=".8" fill="#333"/><circle cx="4.5" cy="9" r=".8" fill="#333"/></svg>
<div class="a" id="stripesA"></div>
<div class="a" id="stripesB"></div>
</body></html>
